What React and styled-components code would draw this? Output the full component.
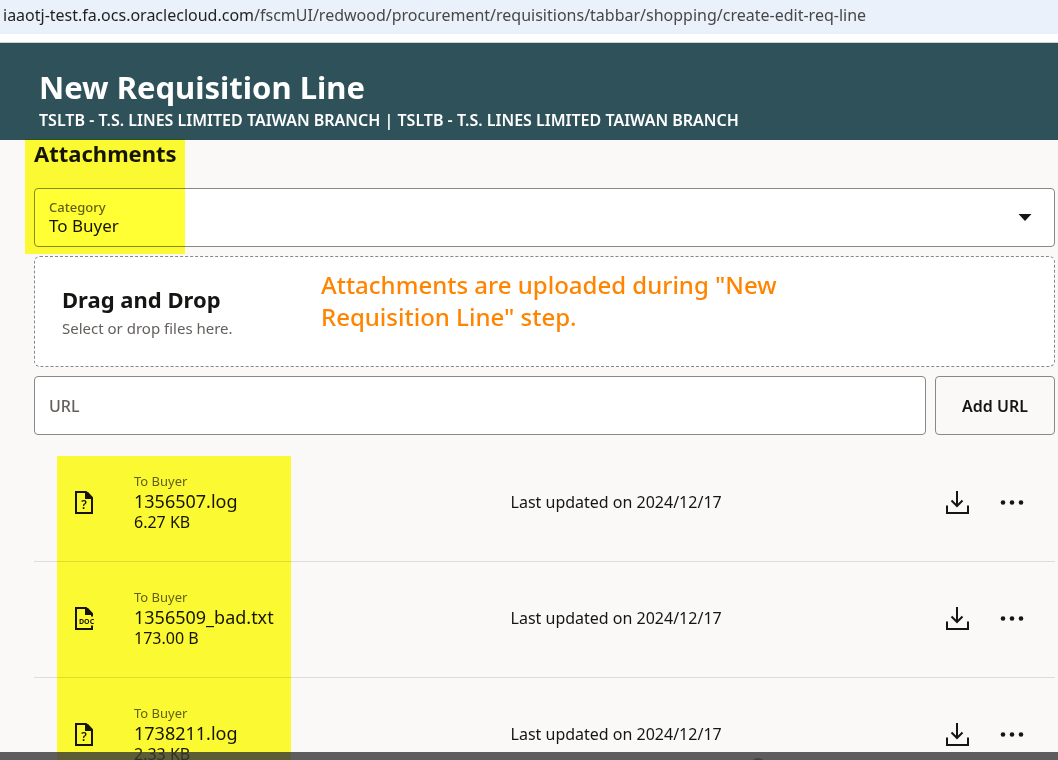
import React from "react";
import styled, { createGlobalStyle } from "styled-components";

const GlobalStyle = createGlobalStyle`
  *, *::before, *::after { box-sizing: border-box; }
  body {
    margin: 0;
    background: #fbf9f8;
    color: #161513;
    font-family: "Noto Sans", "Open Sans", sans-serif;
  }
  h1, h2, h3, p, ul { margin: 0; padding: 0; }
  button, input, select { font: inherit; color: inherit; }
`;

const Page = styled.div`
  position: relative;
  height: 100vh;
  overflow: hidden;
`;

const AddressBar = styled.div`
  height: 42px;
  padding-left: 3px;
  border-bottom: 8px solid #ffffff;
  background: #ebf1fb;
  color: #474747;
  font-size: 16px;
  line-height: 30px;
  white-space: nowrap;
`;

const Host = styled.span`
  color: #1f1f1f;
`;

const Header = styled.header`
  padding: 22px 39px 9px;
  border-top: 1px solid #c9d6d8;
  background: #2f5159;
  color: #ffffff;
`;

const Title = styled.h1`
  font-size: 31px;
  line-height: 44px;
  font-weight: 700;
`;

const Subtitle = styled.p`
  font-size: 16px;
  line-height: 22px;
  font-weight: 600;
`;

const Content = styled.main`
  padding: 0 3px 0 34px;
`;

const SectionTitle = styled.h2`
  padding-bottom: 22px;
  font-size: 22px;
  line-height: 26px;
  font-weight: 700;
`;

const Stack = styled.div`
  display: flex;
  flex-direction: column;
  gap: 9px;
`;

const SelectField = styled.div`
  display: flex;
  align-items: center;
  height: 59px;
  padding: 0 22px 0 14px;
  border: 1px solid #8a8886;
  border-radius: 4px;
  background: #ffffff;
`;

const FieldText = styled.div`
  flex: 1;
  display: flex;
  flex-direction: column;
`;

const FieldLabel = styled.label`
  color: #63605d;
  font-size: 13px;
  line-height: 16px;
  font-weight: 500;
`;

const Select = styled.select`
  appearance: none;
  width: 100%;
  padding: 0;
  border: 0;
  outline: 0;
  background: transparent;
  font-size: 17px;
  line-height: 22px;
`;

const DropZone = styled.section`
  height: 111px;
  padding: 27px;
  border: 1px dashed #8a8886;
  border-radius: 6px;
  background: #ffffff;
`;

const DropTitle = styled.h3`
  font-size: 22px;
  line-height: 30px;
  font-weight: 700;
`;

const DropHint = styled.p`
  color: #63605d;
  font-size: 15px;
  line-height: 28px;
`;

const UrlRow = styled.div`
  display: flex;
  gap: 9px;
`;

const UrlInput = styled.input`
  flex: 1;
  min-width: 0;
  height: 59px;
  padding: 0 14px;
  border: 1px solid #8a8886;
  border-radius: 4px;
  outline: 0;
  background: #ffffff;
  font-size: 16px;
  &::placeholder {
    color: #63605d;
    font-weight: 500;
    opacity: 1;
  }
`;

const AddButton = styled.button`
  width: 120px;
  height: 59px;
  border: 1px solid #8a8886;
  border-radius: 4px;
  background: transparent;
  font-size: 16px;
  font-weight: 600;
`;

const FileList = styled.ul`
  padding-top: 11px;
  list-style: none;
`;

const FileRow = styled.li`
  display: grid;
  grid-template-columns: 100px 13fr 15fr auto;
  align-items: center;
  height: 116px;
  padding: 0 31px 3px 0;
  border-bottom: 1px solid #dedcda;
`;

const FileIconCell = styled.span`
  display: flex;
  padding-left: 38px;
`;

const FileCategory = styled.p`
  color: #63605d;
  font-size: 13px;
  line-height: 18px;
`;

const FileName = styled.p`
  font-size: 18px;
  line-height: 22px;
`;

const FileMeta = styled.p`
  font-size: 16px;
  line-height: 20px;
`;

const Actions = styled.div`
  display: flex;
  gap: 31px;
`;

const IconButton = styled.button`
  display: flex;
  padding: 0;
  border: 0;
  background: transparent;
`;

const Marker = styled.div`
  position: absolute;
  left: ${(p) => p.$left}px;
  top: ${(p) => p.$top}px;
  width: ${(p) => p.$width}px;
  ${(p) => (p.$height ? `height: ${p.$height}px;` : "bottom: 0;")}
  background: #ffff33;
  mix-blend-mode: multiply;
  pointer-events: none;
`;

const Note = styled.p`
  position: absolute;
  left: 321px;
  top: 269px;
  width: 500px;
  color: #ff8400;
  font-size: 24px;
  line-height: 32px;
  font-weight: 500;
`;

const BottomBar = styled.div`
  position: absolute;
  left: 0;
  right: 0;
  bottom: 0;
  height: 8px;
  background: rgba(54, 54, 54, 0.8);
`;

const BarKnob = styled.svg`
  position: absolute;
  left: 750px;
  bottom: 0;
`;

function Caret() {
  return (
    <svg width="14" height="8" viewBox="0 0 14 8" aria-hidden="true">
      <path d="M0.5 0h13L7 7z" fill="#161513" />
    </svg>
  );
}

function FileIcon({ kind }) {
  return (
    <svg width="24" height="24" viewBox="0 0 24 24" fill="none" aria-hidden="true">
      {kind === "doc" ? (
        <>
          <path d="M20 19.5V23H4V2h10L20 8V10.5" stroke="#161513" strokeWidth="2" />
          <path d="M13 2v7h8V7.5L16 2z" fill="#161513" />
          <text x="7" y="18" fontSize="7" fontWeight="700" fill="#161513">DOC</text>
        </>
      ) : (
        <>
          <path d="M4 2h10L20 8V23H4z" stroke="#161513" strokeWidth="2" />
          <path d="M13 2v7h8V7.5L16 2z" fill="#161513" />
          <text x="12" y="19" fontSize="12" fontWeight="600" textAnchor="middle" fill="#161513">?</text>
        </>
      )}
    </svg>
  );
}

function DownloadIcon() {
  return (
    <svg width="24" height="24" viewBox="0 0 24 24" fill="none" stroke="#161513" strokeWidth="2" aria-hidden="true">
      <path d="M12 1V16M6.5 10.5L12 16l5.5-5.5M2 15.5V23H23V15.5" />
    </svg>
  );
}

function MoreIcon() {
  return (
    <svg width="24" height="24" viewBox="0 0 24 24" fill="#161513" aria-hidden="true">
      <circle cx="3" cy="12.5" r="2.3" />
      <circle cx="12" cy="12.5" r="2.3" />
      <circle cx="21" cy="12.5" r="2.3" />
    </svg>
  );
}

const files = [
  { name: "1356507.log", size: "6.27 KB", kind: "unknown" },
  { name: "1356509_bad.txt", size: "173.00 B", kind: "doc" },
  { name: "1738211.log", size: "2.33 KB", kind: "unknown" },
];

export default function App() {
  return (
    <Page>
      <GlobalStyle />
      <AddressBar>
        <Host>iaaotj-test.fa.ocs.oraclecloud.com</Host>
        /fscmUI/redwood/procurement/requisitions/tabbar/shopping/create-edit-req-line
      </AddressBar>
      <Header>
        <Title>New Requisition Line</Title>
        <Subtitle>TSLTB - T.S. LINES LIMITED TAIWAN BRANCH | TSLTB - T.S. LINES LIMITED TAIWAN BRANCH</Subtitle>
      </Header>
      <Content>
        <SectionTitle>Attachments</SectionTitle>
        <Stack>
          <SelectField>
            <FieldText>
              <FieldLabel htmlFor="category">Category</FieldLabel>
              <Select id="category" defaultValue="To Buyer">
                <option>To Buyer</option>
              </Select>
            </FieldText>
            <Caret />
          </SelectField>
          <DropZone>
            <DropTitle>Drag and Drop</DropTitle>
            <DropHint>Select or drop files here.</DropHint>
          </DropZone>
          <UrlRow>
            <UrlInput type="url" placeholder="URL" aria-label="URL" />
            <AddButton type="button">Add URL</AddButton>
          </UrlRow>
        </Stack>
        <FileList>
          {files.map((file) => (
            <FileRow key={file.name}>
              <FileIconCell>
                <FileIcon kind={file.kind} />
              </FileIconCell>
              <div>
                <FileCategory>To Buyer</FileCategory>
                <FileName>{file.name}</FileName>
                <FileMeta>{file.size}</FileMeta>
              </div>
              <FileMeta>Last updated on 2024/12/17</FileMeta>
              <Actions>
                <IconButton type="button" aria-label="Download">
                  <DownloadIcon />
                </IconButton>
                <IconButton type="button" aria-label="More actions">
                  <MoreIcon />
                </IconButton>
              </Actions>
            </FileRow>
          ))}
        </FileList>
      </Content>
      <Note>
        Attachments are uploaded during "New
        <br />
        Requisition Line" step.
      </Note>
      <Marker $left={25} $top={139} $width={160} $height={115} />
      <Marker $left={57} $top={456} $width={234} />
      <BottomBar>
        <BarKnob width="16" height="2" viewBox="0 0 16 2" aria-hidden="true">
          <circle cx="8" cy="8" r="8" fill="#444444" />
        </BarKnob>
      </BottomBar>
    </Page>
  );
}
